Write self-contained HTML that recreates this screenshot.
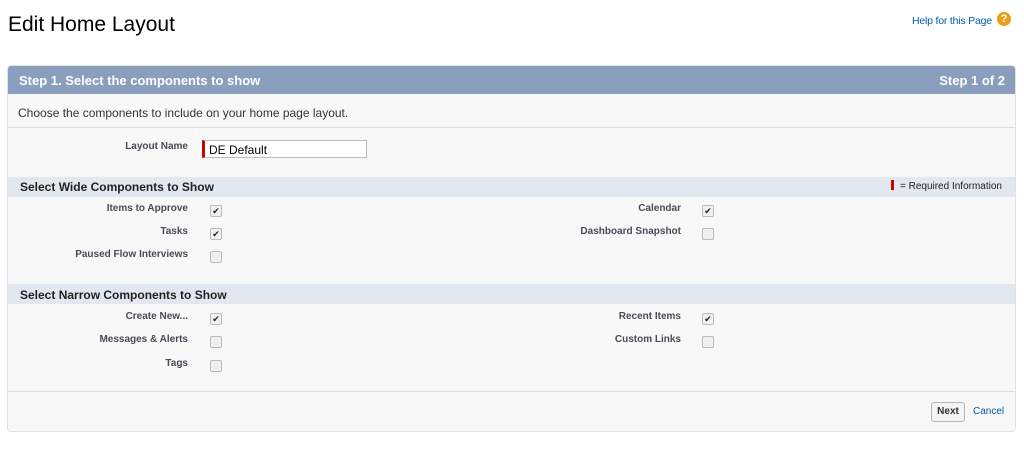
<!DOCTYPE html>
<html><head><style>
body{margin:0;background:#fff;font-family:"Liberation Sans",Arial,sans-serif;width:1024px;height:456px;overflow:hidden;position:relative}
.a{position:absolute}
h1{position:absolute;left:8px;top:13px;margin:0;font-size:21px;font-weight:normal;color:#000}
.help{left:912px;top:15px;font-size:10.5px;color:#015ba7;letter-spacing:-0.2px}
.q{left:997px;top:12px;width:14px;height:14px;border-radius:50%;background:#e8a01a;color:#fff;font-size:11px;font-weight:bold;text-align:center;line-height:14px}
.panel{left:7px;top:65px;width:1009px;height:367px;background:#f8f8f8;border:1px solid #e0e3e5;border-radius:4px;box-sizing:border-box;overflow:hidden}
.hdr{left:0;top:0;width:100%;height:28px;background:#8a9ebe;color:#fff;font-weight:bold;font-size:13px}
.sec{left:0;width:100%;height:20px;background:#e3e7ef;font-weight:bold;font-size:12px;color:#222}
.lbl{font-size:10px;font-weight:bold;color:#4a4a56;text-align:right;width:200px}
.cb{width:10px;height:10px;border:1px solid #bbb;border-radius:2px;background:#f0f0f0;font-size:9px;line-height:10px;text-align:center;color:#222}
</style></head><body>
<h1>Edit Home Layout</h1>
<div class="a help">Help for this Page</div>
<div class="a q">?</div>
<div class="a panel">
<div class="a hdr"><span class="a" style="left:11px;top:7px">Step 1. Select the components to show</span><span class="a" style="right:10px;top:7px">Step 1 of 2</span></div>
<div class="a" style="left:10px;top:40px;font-size:12px;color:#333">Choose the components to include on your home page layout.</div>
<div class="a" style="left:0;top:61px;width:100%;border-top:1px solid #dcdcdc"></div>
<div class="a lbl" style="left:-20px;top:75px">Layout Name</div>
<div class="a" style="left:194px;top:74px;width:165px;height:18px;background:#fff;border:1px solid #bbb;box-sizing:border-box;border-left:3px solid #c00;font-size:12px;padding:2px 0 0 4px">DE Default</div>
<div class="a sec" style="top:111px"><span class="a" style="left:12px;top:3px">Select Wide Components to Show</span><span class="a" style="right:13px;top:3px;font-weight:normal;font-size:10px"><span style="display:inline-block;width:3px;height:10px;background:#c00;vertical-align:-1px;margin-right:6px"></span>= Required Information</span></div>
<div class="a lbl" style="left:-20px;top:137px">Items to Approve</div><div class="a cb" style="left:202px;top:139px">✔</div>
<div class="a lbl" style="left:-20px;top:160px">Tasks</div><div class="a cb" style="left:202px;top:162px">✔</div>
<div class="a lbl" style="left:-20px;top:183px">Paused Flow Interviews</div><div class="a cb" style="left:202px;top:185px"></div>
<div class="a lbl" style="left:473px;top:137px">Calendar</div><div class="a cb" style="left:694px;top:139px">✔</div>
<div class="a lbl" style="left:473px;top:160px">Dashboard Snapshot</div><div class="a cb" style="left:694px;top:162px"></div>
<div class="a sec" style="top:218px"><span class="a" style="left:12px;top:4px">Select Narrow Components to Show</span></div>
<div class="a lbl" style="left:-20px;top:245px">Create New...</div><div class="a cb" style="left:202px;top:247px">✔</div>
<div class="a lbl" style="left:-20px;top:268px">Messages &amp; Alerts</div><div class="a cb" style="left:202px;top:270px"></div>
<div class="a lbl" style="left:-20px;top:292px">Tags</div><div class="a cb" style="left:202px;top:294px"></div>
<div class="a lbl" style="left:473px;top:245px">Recent Items</div><div class="a cb" style="left:694px;top:247px">✔</div>
<div class="a lbl" style="left:473px;top:268px">Custom Links</div><div class="a cb" style="left:694px;top:270px"></div>
<div class="a" style="left:0;top:325px;width:100%;border-top:1px solid #dcdcdc"></div>
<div class="a" style="left:923px;top:336px;width:34px;height:20px;border:1px solid #b5b5b5;border-radius:3px;background:#f4f4f4;box-sizing:border-box;font-size:10px;font-weight:bold;color:#333;text-align:center;line-height:18px">Next</div>
<div class="a" style="left:965px;top:340px;font-size:10px;color:#015ba7">Cancel</div>
</div>
</body></html>
